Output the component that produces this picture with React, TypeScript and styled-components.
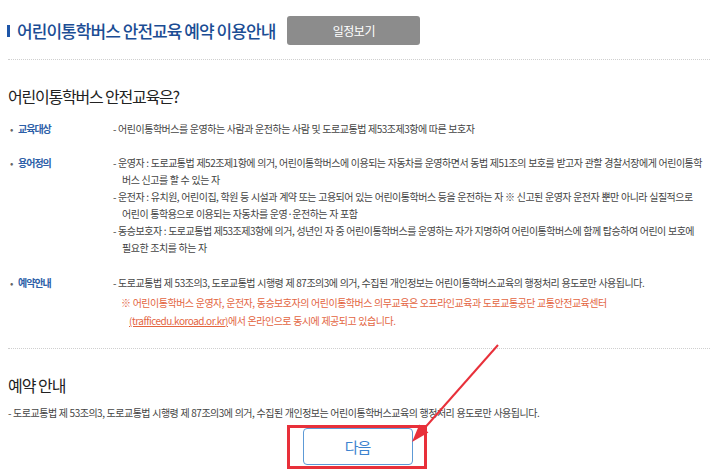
import React from "react";
import styled, { createGlobalStyle } from "styled-components";

const Global = createGlobalStyle`
  html, body { margin: 0; padding: 0; background: #fff; }
  body { font-family: "Noto Sans CJK KR", "Noto Sans", sans-serif; color: #333; }
`;

const Page = styled.div`
  position: relative;
  width: 720px;
  height: 476px;
  overflow: hidden;
  box-sizing: border-box;
  padding: 16px 10px 0 8px;
`;

const TitleRow = styled.div`
  display: flex;
  align-items: center;
  gap: 12px;
  height: 29px;
`;

const Title = styled.h1`
  margin: 0 0 0 -1px;
  display: flex;
  align-items: center;
  gap: 7px;
  font-size: 17px;
  font-weight: 500;
  letter-spacing: -0.95px;
  line-height: 20px;
  color: #1b4d94;
  &::before {
    content: "";
    width: 3px;
    height: 12px;
    background: #1e56a8;
  }
`;

const GrayButton = styled.button`
  width: 133px;
  height: 29px;
  border: none;
  border-radius: 3px;
  background: #8c8c8c;
  color: #fff;
  font-family: inherit;
  font-size: 12px;
  letter-spacing: -0.5px;
  padding: 0;
`;

const Divider = styled.div<{ $top: number }>`
  margin-top: ${(p) => p.$top}px;
  border-top: 1px dotted #cfcfcf;
`;

const SectionHeading = styled.h2<{ $top: number; $ls: number }>`
  margin: ${(p) => p.$top}px 0 0;
  font-size: 16px;
  font-weight: 400;
  line-height: 20px;
  letter-spacing: ${(p) => p.$ls}px;
  color: #222;
`;

const Row = styled.div<{ $top: number }>`
  display: flex;
  margin-top: ${(p) => p.$top}px;
`;

const Label = styled.div`
  width: 105px;
  flex: none;
  display: flex;
  font-size: 10px;
  font-weight: 700;
  letter-spacing: -1px;
  line-height: 17px;
  color: #2d5fa8;
`;

const Bullet = styled.span`
  width: 10px;
  padding-left: 2px;
  box-sizing: border-box;
  color: #666;
  font-weight: 400;
`;

const Content = styled.div`
  flex: 1;
  font-size: 10px;
  letter-spacing: -0.5px;
  word-spacing: 0.4px;
  line-height: 17px;
  color: #444;
  white-space: nowrap;
`;

const Item = styled.div`
  padding-left: 9px;
  text-indent: -9px;
`;

const Note = styled.div`
  margin-top: 3px;
  padding-left: 16px;
  text-indent: -8px;
  line-height: 18px;
  color: #e3653f;
`;

const Link = styled.a`
  color: inherit;
  text-decoration: underline;
`;

const BodyText = styled.p`
  margin: 9px 0 0;
  font-size: 10px;
  letter-spacing: -0.5px;
  word-spacing: 0.4px;
  line-height: 17px;
  color: #444;
  white-space: nowrap;
`;

const ButtonArea = styled.div`
  display: flex;
  justify-content: center;
  margin-top: 4px;
`;

const RedBox = styled.div`
  display: flex;
  border: 3px solid #e8303a;
  padding: 0 11px 1px 13px;
  margin-left: -5px;
`;

const NextButton = styled.button`
  width: 110px;
  height: 37px;
  border: 1.5px solid #5d9ad6;
  border-radius: 4px;
  background: #fff;
  color: #3d83cf;
  font-family: inherit;
  font-size: 15px;
  letter-spacing: -1px;
  padding: 0;
`;

const Overlay = styled.svg`
  position: absolute;
  left: 0;
  top: 0;
  pointer-events: none;
`;

export default function App() {
  return (
    <>
      <Global />
      <Page>
        <TitleRow>
          <Title>어린이통학버스 안전교육 예약 이용안내</Title>
          <GrayButton>일정보기</GrayButton>
        </TitleRow>
        <Divider $top={14} />
        <SectionHeading $top={26} $ls={-1.2}>
          어린이통학버스 안전교육은?
        </SectionHeading>

        <Row $top={14}>
          <Label>
            <Bullet>•</Bullet>교육대상
          </Label>
          <Content>
            - 어린이통학버스를 운영하는 사람과 운전하는 사람 및 도로교통법 제53조제3항에 따른 보호자
          </Content>
        </Row>

        <Row $top={17}>
          <Label>
            <Bullet>•</Bullet>용어정의
          </Label>
          <Content>
            <Item>
              - 운영자 : 도로교통법 제52조제1항에 의거, 어린이통학버스에 이용되는 자동차를 운영하면서 동법 제51조의 보호를 받고자 관할 경찰서장에게 어린이통학
              <br />
              버스 신고를 할 수 있는 자
            </Item>
            <Item>
              - 운전자 : 유치원, 어린이집, 학원 등 시설과 계약 또는 고용되어 있는 어린이통학버스 등을 운전하는 자 ※ 신고된 운영자 운전자 뿐만 아니라 실질적으로
              <br />
              어린이 통학용으로 이용되는 자동차를 운영·운전하는 자 포함
            </Item>
            <Item>
              - 동승보호자 : 도로교통법 제53조제3항에 의거, 성년인 자 중 어린이통학버스를 운영하는 자가 지명하여 어린이통학버스에 함께 탑승하여 어린이 보호에
              <br />
              필요한 조치를 하는 자
            </Item>
          </Content>
        </Row>

        <Row $top={18}>
          <Label>
            <Bullet>•</Bullet>예약안내
          </Label>
          <Content>
            - 도로교통법 제 53조의3, 도로교통법 시행령 제 87조의3에 의거, 수집된 개인정보는 어린이통학버스교육의 행정처리 용도로만 사용됩니다.
            <Note>
              ※ 어린이통학버스 운영자, 운전자, 동승보호자의 어린이통학버스 의무교육은 오프라인교육과 도로교통공단 교통안전교육센터
              <br />
              <Link>(trafficedu.koroad.or.kr)</Link>에서 온라인으로 동시에 제공되고 있습니다.
            </Note>
          </Content>
        </Row>

        <Divider $top={18} />
        <SectionHeading $top={26} $ls={-1}>
          예약 안내
        </SectionHeading>
        <BodyText>
          - 도로교통법 제 53조의3, 도로교통법 시행령 제 87조의3에 의거, 수집된 개인정보는 어린이통학버스교육의 행정처리 용도로만 사용됩니다.
        </BodyText>
        <ButtonArea>
          <RedBox>
            <NextButton>다음</NextButton>
          </RedBox>
        </ButtonArea>

        <Overlay width="720" height="476" viewBox="0 0 720 476">
          <line x1="498" y1="345" x2="422" y2="431" stroke="#e8303a" strokeWidth="2" />
          <polygon points="412,442 428.4,432.5 419.4,424.5" fill="#e8303a" />
        </Overlay>
      </Page>
    </>
  );
}
